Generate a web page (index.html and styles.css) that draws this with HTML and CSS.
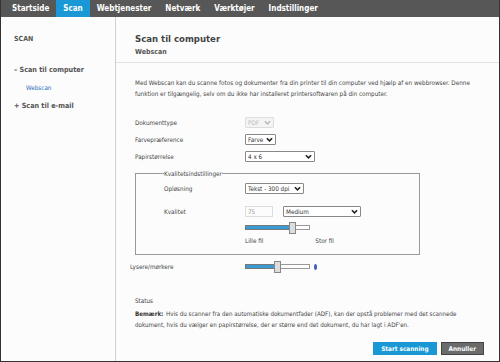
FILE: index.html
```html
<!DOCTYPE html>
<html lang="da">
<head>
    <meta charset="UTF-8">
    <title>Webscan</title>
    <link rel="stylesheet" href="styles.css">
</head>
<body>
    <div class="frame">
        <div class="topnav">
            <span class="tab">Startside</span>
            <span class="tab active">Scan</span>
            <span class="tab">Webtjenester</span>
            <span class="tab">Netværk</span>
            <span class="tab">Værktøjer</span>
            <span class="tab">Indstillinger</span>
        </div>

        <div class="main">
            <div class="sidebar">
                <div class="side-title">SCAN</div>
                <div class="side-group first">– Scan til computer</div>
                <div class="side-link">Webscan</div>
                <div class="side-group">+ Scan til e-mail</div>
            </div>

            <div class="content">
                <div class="head">
                    <h1>Scan til computer</h1>
                    <h2>Webscan</h2>
                </div>

                <div class="body">
                    <p class="intro">Med Webscan kan du scanne fotos og dokumenter fra din printer til din computer ved hjælp af en webbrowser. Denne funktion er tilgængelig, selv om du ikke har installeret printersoftwaren på din computer.</p>

                    <div class="row">
                        <span class="label">Dokumenttype</span>
                        <span class="sel disabled w-pdf">PDF <svg viewBox="0 0 8 5"><path d="M1 1l3 3 3-3"/></svg></span>
                    </div>
                    <div class="row">
                        <span class="label">Farvepræference</span>
                        <span class="sel w-farve">Farve <svg viewBox="0 0 8 5"><path d="M1 1l3 3 3-3"/></svg></span>
                    </div>
                    <div class="row">
                        <span class="label">Papirstørrelse</span>
                        <span class="sel w-paper">4 x 6 <svg viewBox="0 0 8 5"><path d="M1 1l3 3 3-3"/></svg></span>
                    </div>

                    <fieldset class="quality">
                        <legend>Kvalitetsindstillinger</legend>
                        <div class="row inner">
                            <span class="label">Opløsning</span>
                            <span class="sel w-res">Tekst - 300 dpi <svg viewBox="0 0 8 5"><path d="M1 1l3 3 3-3"/></svg></span>
                        </div>
                        <div class="row inner">
                            <span class="label">Kvalitet</span>
                            <span class="num">75</span>
                            <span class="sel w-medium">Medium <svg viewBox="0 0 8 5"><path d="M1 1l3 3 3-3"/></svg></span>
                        </div>
                        <div class="slider-block">
                            <div class="slider">
                                <span class="fill" style="width: 43px"></span>
                                <span class="thumb"></span>
                                <span class="rest"></span>
                            </div>
                            <div class="ends"><span>Lille fil</span><span>Stor fil</span></div>
                        </div>
                    </fieldset>

                    <div class="row light">
                        <span class="label">Lysere/mørkere</span>
                        <div class="slider">
                            <span class="fill" style="width: 28px"></span>
                            <span class="thumb"></span>
                            <span class="rest"></span>
                        </div>
                        <span class="dot"></span>
                    </div>

                    <div class="status">Status</div>
                    <p class="note"><b>Bemærk:</b> Hvis du scanner fra den automatiske dokumentfader (ADF), kan der opstå problemer med det scannede dokument, hvis du vælger en papirstørrelse, der er større end det dokument, du har lagt i ADF'en.</p>

                    <div class="actions">
                        <button class="btn primary">Start scanning</button>
                        <button class="btn grey">Annuller</button>
                    </div>
                </div>
            </div>
        </div>
    </div>
</body>
</html>
```

FILE: styles.css
```css
body {
    margin: 0;
    font-family: "DejaVu Sans Condensed", "Liberation Sans", sans-serif;
    background-color: #fcfcfc;
    color: #444;
}
.frame {
    width: 500px;
    height: 362px;
    box-sizing: border-box;
    border: 1px solid #333;
    border-top: none;
    display: flex;
    flex-direction: column;
    overflow: hidden;
}
.topnav {
    height: 17px;
    flex-shrink: 0;
    background-color: #575757;
    display: flex;
    padding-left: 4px;
}
.tab {
    color: #fff;
    font-weight: bold;
    font-size: 8px;
    line-height: 17px;
    padding: 0 7px;
}
.tab.active {
    background-color: #1a98d5;
}
.main {
    flex: 1;
    display: flex;
    min-height: 0;
}
.sidebar {
    width: 115px;
    flex-shrink: 0;
    border-right: 1px solid #d0d0d0;
    padding-left: 13px;
    box-sizing: border-box;
}
.side-title {
    font-weight: bold;
    font-size: 7px;
    line-height: 10px;
    color: #555;
    margin-top: 17px;
}
.side-group {
    font-weight: bold;
    font-size: 7.2px;
    line-height: 10px;
    color: #555;
    margin-top: 8px;
}
.side-group.first {
    margin-top: 21px;
}
.side-link {
    font-size: 6.3px;
    line-height: 10px;
    color: #2a6fb5;
    margin: 8px 0 0 12px;
}
.content {
    flex: 1;
    min-width: 0;
}
.head {
    padding: 16px 0 5px 19px;
    border-bottom: 1px solid #e2e2e2;
}
.head h1 {
    margin: 0;
    font-size: 9.5px;
    line-height: 11px;
    color: #444;
}
.head h2 {
    margin: 4px 0 0;
    font-size: 7px;
    line-height: 9px;
    color: #555;
}
.body {
    padding: 0 11px 0 19px;
    font-size: 6.3px;
}
.intro {
    margin: 14px 0 15px;
    line-height: 11px;
}
.row {
    display: flex;
    align-items: center;
    height: 17px;
}
.label {
    width: 110px;
    flex-shrink: 0;
}
.sel {
    display: flex;
    align-items: center;
    justify-content: space-between;
    height: 11px;
    box-sizing: border-box;
    border: 1px solid #888;
    border-radius: 1px;
    background-color: #fff;
    padding: 0 2px;
    font-size: 6.3px;
    color: #333;
}
.sel svg {
    width: 7px;
    height: 5px;
    fill: none;
    stroke: #222;
    stroke-width: 1.8;
}
.sel.disabled {
    color: #bbb;
    border-color: #ddd;
    background-color: #f4f4f4;
}
.sel.disabled svg {
    stroke: #bbb;
}
.w-pdf { width: 29px; }
.w-farve { width: 31px; }
.w-paper { width: 70px; }
.w-res { width: 59px; }
.w-medium { width: 78px; }
.quality {
    margin: 4px 0 0;
    padding: 0 0 9px 28px;
    border: 1px solid #999;
    width: 285px;
    box-sizing: border-box;
}
.quality legend {
    padding: 0;
    font-size: 6.3px;
    line-height: 9px;
}
.row.inner {
    height: 20px;
}
.row.inner + .row.inner {
    margin-top: 3px;
}
.row.inner .label {
    width: 81px;
}
.num {
    width: 28px;
    height: 11px;
    box-sizing: border-box;
    border: 1px solid #ddd;
    color: #999;
    font-size: 6.3px;
    padding-left: 2px;
    line-height: 9px;
    margin-right: 10px;
}
.slider-block {
    margin: 1px 0 0 81px;
}
.slider {
    display: flex;
    align-items: center;
    width: 65px;
    height: 11px;
}
.slider .fill {
    height: 3px;
    background-color: #3a9ad2;
    border: 1px solid #777;
    border-right: none;
}
.slider .thumb {
    width: 5px;
    height: 10px;
    background-color: #ddd;
    border: 1px solid #888;
}
.slider .rest {
    flex: 1;
    height: 3px;
    background-color: #fff;
    border: 1px solid #999;
    border-left: none;
}
.ends {
    display: flex;
    gap: 52px;
    margin-top: 4px;
    line-height: 8px;
}
.row.light {
    margin: 3px 0 0 -5px;
}
.row.light .label {
    width: 115px;
}
.dot {
    width: 3px;
    height: 6px;
    border-radius: 50%;
    background-color: #4a5cc0;
    margin-left: 4px;
}
.status {
    margin-top: 21px;
    line-height: 10px;
}
.note {
    margin: 2px 0 0;
    max-width: 340px;
    line-height: 11px;
    font-size: 6.2px;
}
.note b {
    color: #333;
    padding-right: 1px;
}
.actions {
    display: flex;
    justify-content: flex-end;
    gap: 4px;
    margin: 12px 4px 0 0;
}
.btn {
    border: none;
    color: #fff;
    font-family: inherit;
    font-weight: bold;
    font-size: 6.4px;
    height: 13px;
    padding: 0 8px;
    cursor: pointer;
}
.btn.primary {
    background-color: #1a98d5;
}
.btn.grey {
    background-color: #6b6b6b;
    border: 1px solid #444;
    padding: 0 7px;
}
```
